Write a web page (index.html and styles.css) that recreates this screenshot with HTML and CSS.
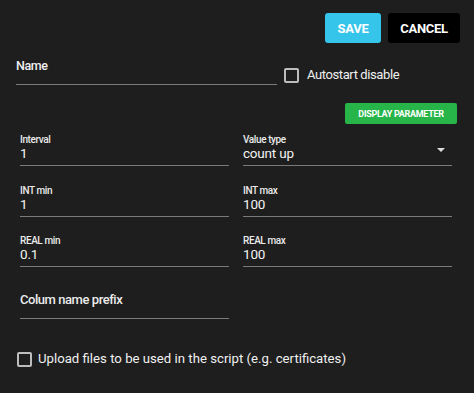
FILE: index.html
```html
<!DOCTYPE html>
<html>
<head>
<meta charset="utf-8">
<link rel="stylesheet" href="styles.css">
</head>
<body>
<div class="dialog">
  <div class="actions">
    <button class="btn btn-save">SAVE</button>
    <button class="btn btn-cancel">CANCEL</button>
  </div>
  <div class="name-row">
    <div class="name-field"><span class="name-label">Name</span></div>
    <label class="check check-auto"><span class="box"></span><span class="check-text">Autostart disable</span></label>
  </div>
  <div class="param-row">
    <button class="btn-param">DISPLAY PARAMETER</button>
  </div>
  <div class="grid">
    <div class="field"><div class="label">Interval</div><div class="value">1</div></div>
    <div class="field select"><div class="label">Value type</div><div class="value">count up</div><span class="arrow"></span></div>
    <div class="field"><div class="label">INT min</div><div class="value">1</div></div>
    <div class="field"><div class="label">INT max</div><div class="value">100</div></div>
    <div class="field"><div class="label">REAL min</div><div class="value">0.1</div></div>
    <div class="field"><div class="label">REAL max</div><div class="value">100</div></div>
  </div>
  <div class="prefix-field"><span class="prefix-label">Colum name prefix</span></div>
  <label class="check check-upload"><span class="box"></span><span class="check-text">Upload files to be used in the script (e.g. certificates)</span></label>
</div>
</body>
</html>
```
FILE: styles.css
```css
html, body {
  margin: 0;
  padding: 0;
  background: #1e1e1e;
  width: 474px;
  height: 393px;
  overflow: hidden;
}
body {
  font-family: Roboto, "Liberation Sans", sans-serif;
  color: #ececec;
}
.dialog {
  display: flex;
  flex-direction: column;
}
.actions {
  display: flex;
  justify-content: flex-end;
  gap: 7px;
  padding: 13px 14px 0 0;
}
.btn {
  border: none;
  height: 30px;
  border-radius: 3px;
  font-family: Roboto, "Liberation Sans", sans-serif;
  font-size: 13px;
  font-weight: 700;
  color: #fff;
  padding: 0;
  letter-spacing: -0.3px;
}
.btn-save {
  width: 56px;
  background: #35c4ea;
}
.btn-cancel {
  width: 72px;
  background: #000;
}
.name-row {
  display: flex;
  align-items: flex-start;
  gap: 7px;
  margin-top: 14px;
  padding-left: 16px;
}
.name-field {
  width: 261px;
  border-bottom: 1px solid #7a7a7a;
  padding-bottom: 10px;
  line-height: 16px;
}
.name-label {
  font-size: 12.5px;
  font-weight: 500;
  color: #f0f0f0;
  letter-spacing: -0.4px;
}
.check {
  display: flex;
  align-items: center;
  line-height: 16px;
  font-size: 13px;
  color: #f0f0f0;
}
.check-auto {
  margin-top: 10px;
  font-size: 13px;
  letter-spacing: -0.4px;
}
.box {
  width: 11px;
  height: 11px;
  border: 2px solid #bdbdbd;
  border-radius: 2px;
  flex: none;
}
.check-auto .check-text {
  margin-left: 8px;
}
.param-row {
  display: flex;
  justify-content: flex-end;
  padding-right: 17px;
  margin-top: 18px;
}
.btn-param {
  width: 112px;
  height: 21px;
  border: none;
  border-radius: 2px;
  background: #27b54a;
  color: #fff;
  font-family: Roboto, "Liberation Sans", sans-serif;
  font-size: 9px;
  font-weight: 700;
  letter-spacing: -0.3px;
  padding: 0;
}
.grid {
  display: grid;
  grid-template-columns: 209px 209px;
  column-gap: 14px;
  row-gap: 18.5px;
  padding-left: 20px;
  margin-top: 10px;
}
.field {
  position: relative;
  border-bottom: 1px solid #7a7a7a;
  padding-bottom: 4px;
}
.label {
  font-size: 10px;
  font-weight: 500;
  line-height: 11px;
  color: #eaeaea;
  letter-spacing: -0.4px;
}
.value {
  font-size: 13.5px;
  line-height: 16px;
  color: #f2f2f2;
  letter-spacing: -0.2px;
}
.arrow {
  position: absolute;
  right: 7px;
  top: 14px;
  width: 0;
  height: 0;
  border-left: 4px solid transparent;
  border-right: 4px solid transparent;
  border-top: 4px solid #dcdcdc;
}
.prefix-field {
  width: 209px;
  margin-left: 20px;
  margin-top: 24px;
  border-bottom: 1px solid #7a7a7a;
  padding-bottom: 10px;
  line-height: 16px;
}
.prefix-label {
  font-size: 13px;
  font-weight: 500;
  color: #ececec;
  letter-spacing: -0.45px;
}
.check-upload {
  margin-top: 32px;
  padding-left: 17px;
  font-size: 13.2px;
}
.check-upload .check-text {
  margin-left: 6px;
}
```
